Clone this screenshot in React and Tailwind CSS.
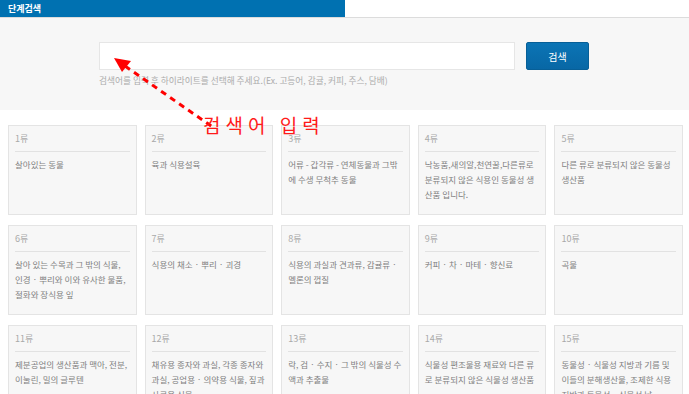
import React from 'react';

const categories = [
    { no: '1류', desc: '살아있는 동물' },
    { no: '2류', desc: '육과 식용설육' },
    { no: '3류', desc: '어류 - 갑각류 - 연체동물과 그밖에 수생 무척추 동물' },
    { no: '4류', desc: '낙농품,새의알,천연꿀,다른류로 분류되지 않은 식용인 동물성 생산품 입니다.' },
    { no: '5류', desc: '다른 류로 분류되지 않은 동물성 생산품' },
    {
        no: '6류',
        desc: (
            <>
                살아 있는 수목과 그 밖의 식물, <span className="whitespace-nowrap">인경</span> · 뿌리와 이와 유사한 물품,{' '}
                <span className="whitespace-nowrap">절화와</span> 장식용 잎
            </>
        ),
    },
    { no: '7류', desc: '식용의 채소 · 뿌리 · 괴경' },
    { no: '8류', desc: '식용의 과실과 견과류, 감귤류 · 멜론의 껍질' },
    { no: '9류', desc: '커피 · 차 · 마테 · 향신료' },
    { no: '10류', desc: '곡물' },
    { no: '11류', desc: '제분공업의 생산품과 맥아, 전분, 이눌린, 밀의 글루텐' },
    { no: '12류', desc: '채유용 종자와 과실, 각종 종자와 과실, 공업용 · 의약용 식물, 짚과 사료용 식물' },
    { no: '13류', desc: '락, 검 · 수지 · 그 밖의 식물성 수액과 추출물' },
    { no: '14류', desc: '식물성 편조물용 재료와 다른 류로 분류되지 않은 식물성 생산품' },
    { no: '15류', desc: '동물성 · 식물성 지방과 기름 및 이들의 분해생산물, 조제한 식용 지방과 동물성 · 식물성 납' },
];

const font = { fontFamily: '"Noto Sans CJK KR", "Noto Sans", sans-serif' };

export default function App() {
    return (
        <div className="relative w-[689px] h-[394px] overflow-hidden bg-white" style={font}>
            {/* tab bar */}
            <div className="flex h-[18px] border-b border-[#dcdcdc]">
                <div className="w-[345px] bg-[#0071b1] text-white text-[9px] font-bold leading-[17px] pl-2">
                    단계검색
                </div>
            </div>

            {/* search panel */}
            <div className="bg-[#f7f7f7] h-[92px] pt-[24px] pl-[99px]">
                <div className="flex gap-[11px]">
                    <input
                        type="text"
                        className="w-[416px] h-[28px] bg-white border border-[#e6e6e6] outline-none px-2 text-[10px]"
                    />
                    <button className="w-[63px] h-[28px] bg-gradient-to-b from-[#0b74b5] to-[#0867a5] text-white text-[10px] rounded-[2px] border border-[#075f97]">
                        검색
                    </button>
                </div>
                <p className="mt-[5px] text-[8.7px] leading-[12px] text-[#ababab]">
                    검색어를 입력 후 하이라이트를 선택해 주세요.(Ex. 고등어, 감귤, 커피, 주스, 담배)
                </p>
            </div>

            {/* category cards */}
            <div className="grid grid-cols-5 gap-x-[8px] gap-y-[10px] pt-[15px] pl-[8px] pr-[6px]">
                {categories.map((c) => (
                    <div
                        key={c.no}
                        className="h-[90px] bg-[#f7f7f7] border border-[#e4e4e4] pl-[6px] pr-[4px] pt-[7px]"
                    >
                        <div className="text-[9px] leading-[12px] text-[#a9a9a9] pb-[6px] mr-[2px] border-b border-[#e2e2e2]">
                            {c.no}
                        </div>
                        <p className="mt-[5px] text-[8.5px] leading-[15px] text-[#808080] break-all">
                            {c.desc}
                        </p>
                    </div>
                ))}
            </div>

            {/* annotation overlay */}
            <svg className="absolute left-0 top-0 pointer-events-none" width="689" height="394">
                <line x1="125" y1="66" x2="214" y2="128" stroke="#ff0000" strokeWidth="3" strokeDasharray="6 5" />
                <polygon points="114,58 131,61 122,72" fill="#ff0000" />
            </svg>
            <div className="absolute left-[203px] top-[112px] text-[19px] leading-[26px] tracking-[5px] text-[#ff1a1a]">
                검색어 입력
            </div>
        </div>
    );
}
